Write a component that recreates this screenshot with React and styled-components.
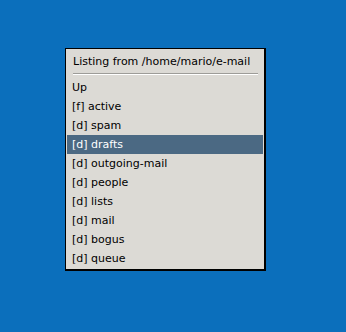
import React from 'react';
import styled, { createGlobalStyle } from 'styled-components';

const GlobalStyle = createGlobalStyle`
  html, body {
    margin: 0;
    padding: 0;
    background: #0b6fbc;
  }
  body {
    font-family: "DejaVu Sans", sans-serif;
  }
`;

const Desktop = styled.div`
  width: 346px;
  height: 332px;
  background: #0b6fbc;
  padding: 48px 0 0 65px;
  box-sizing: border-box;
`;

const Panel = styled.div`
  width: 201px;
  height: 223px;
  box-sizing: border-box;
  background: #dcdad5;
  border-style: solid;
  border-color: #000;
  border-width: 1px 2px 2px 1px;
  padding: 0 1px;
  display: flex;
  flex-direction: column;
`;

const Title = styled.div`
  height: 19px;
  line-height: 19px;
  margin-top: 3px;
  padding: 0 6px;
  font-size: 11px;
  color: #000;
  white-space: nowrap;
`;

const Separator = styled.div`
  margin: 2px 5px 3px 6px;
  height: 1px;
  background: #9d9c98;
  border-bottom: 1px solid #ffffff;
`;

const List = styled.ul`
  list-style: none;
  margin: 0;
  padding: 0;
`;

const Row = styled.li`
  height: 19px;
  line-height: 19px;
  padding: 0 6px 0 5px;
  font-size: 11px;
  white-space: nowrap;
  color: ${p => (p.$selected ? '#ffffff' : '#000000')};
  background: ${p => (p.$selected ? '#4b6983' : 'transparent')};
`;

const entries = [
  'Up',
  '[f] active',
  '[d] spam',
  '[d] drafts',
  '[d] outgoing-mail',
  '[d] people',
  '[d] lists',
  '[d] mail',
  '[d] bogus',
  '[d] queue',
];

export default function App() {
  return (
    <>
      <GlobalStyle />
      <Desktop>
        <Panel>
          <Title>Listing from /home/mario/e-mail</Title>
          <Separator />
          <List>
            {entries.map(e => (
              <Row key={e} $selected={e === '[d] drafts'}>
                {e}
              </Row>
            ))}
          </List>
        </Panel>
      </Desktop>
    </>
  );
}
